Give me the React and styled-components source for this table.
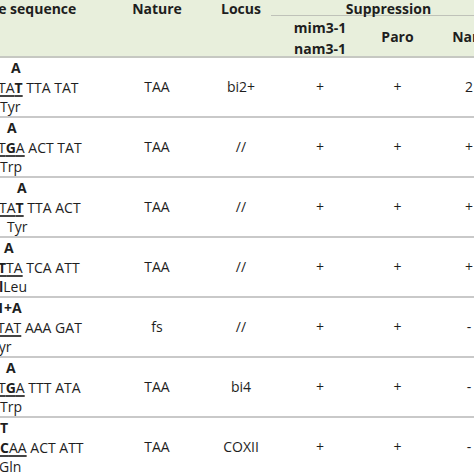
import styled, { createGlobalStyle } from 'styled-components';

const GlobalStyle = createGlobalStyle`
  html, body {
    margin: 0;
    padding: 0;
    background: #fff;
    overflow: hidden;
  }
  body {
    font-family: "Open Sans", "Liberation Sans", sans-serif;
    color: #1e1e1e;
  }
`;

const COLS = '115px 84px 78px 86px 69px 74px';

const rows = [
  {
    top: { text: <b>A</b>, shift: 11 },
    mid: { text: <><u>TA<b>T</b></u> TTA TAT</>, shift: -2 },
    bot: { text: 'Tyr', shift: 0 },
    nature: 'TAA', locus: 'bi2+', mim: '+', paro: '+', nam: '2',
  },
  {
    top: { text: <b>A</b>, shift: 7 },
    mid: { text: <><u>T<b>G</b>A</u> ACT TAT</>, shift: -2 },
    bot: { text: 'Trp', shift: 0 },
    nature: 'TAA', locus: '//', mim: '+', paro: '+', nam: '+',
  },
  {
    top: { text: <b>A</b>, shift: 17 },
    mid: { text: <><u>TA<b>T</b></u> TTA ACT</>, shift: -1 },
    bot: { text: 'Tyr', shift: 7 },
    nature: 'TAA', locus: '//', mim: '+', paro: '+', nam: '+',
  },
  {
    top: { text: <b>A</b>, shift: 4 },
    mid: { text: <><u><b>T</b>TA</u> TCA ATT</>, shift: -2 },
    bot: { text: <><b>l</b>Leu</>, shift: -1 },
    nature: 'TAA', locus: '//', mim: '+', paro: '+', nam: '+',
  },
  {
    top: { text: <b>1+A</b>, shift: -4 },
    mid: { text: <><u>TAT</u> AAA GAT</>, shift: -3 },
    bot: { text: 'Tyr', shift: -9 },
    nature: 'fs', locus: '//', mim: '+', paro: '+', nam: '-',
  },
  {
    top: { text: <b>A</b>, shift: 6 },
    mid: { text: <><u>T<b>G</b>A</u> TTT ATA</>, shift: -2 },
    bot: { text: 'Trp', shift: 0 },
    nature: 'TAA', locus: 'bi4', mim: '+', paro: '+', nam: '-',
  },
  {
    top: { text: <b>T</b>, shift: 0 },
    mid: { text: <><u><b>C</b>AA</u> ACT ATT</>, shift: 0 },
    bot: { text: 'Gln', shift: -1 },
    nature: 'TAA', locus: 'COXII', mim: '+', paro: '+', nam: '-',
  },
];

const App = () => (
  <>
    <GlobalStyle />
    <Frame>
      <Table>
        <Header>
          <HeadCell $col="1" $left>
            <Clip $shift={-70}>Nucleotide sequence</Clip>
          </HeadCell>
          <HeadCell $col="2">Nature</HeadCell>
          <HeadCell $col="3" $offset={6}>Locus</HeadCell>
          <GroupCell>Suppression</GroupCell>
          <SubCell $col="4" $top>
            mim3-1
            <br />
            nam3-1
          </SubCell>
          <SubCell $col="5">Paro</SubCell>
          <SubCell $col="6">Nam</SubCell>
        </Header>

        {rows.map((r, i) => (
          <Row key={i}>
            <SeqCell>
              <Line $shift={r.top.shift}>{r.top.text}</Line>
              <Line $shift={r.mid.shift}>{r.mid.text}</Line>
              <Line $shift={r.bot.shift}>{r.bot.text}</Line>
            </SeqCell>
            <Cell>{r.nature}</Cell>
            <Cell $offset={6}>{r.locus}</Cell>
            <Cell>{r.mim}</Cell>
            <Cell>{r.paro}</Cell>
            <Cell>{r.nam}</Cell>
          </Row>
        ))}
      </Table>
    </Frame>
  </>
);

export default App;

const Frame = styled.div`
  width: 474px;
  height: 474px;
  overflow: hidden;
`;

const Table = styled.div`
  width: 506px;
  font-size: 14px;
`;

const Header = styled.div`
  display: grid;
  grid-template-columns: ${COLS};
  grid-template-rows: 16px 40px;
  height: 56px;
  background: #e8efdc;
  border-bottom: 2px solid #c6c8c2;
  font-weight: 700;
  line-height: 17px;
`;

const HeadCell = styled.div`
  grid-column: ${p => p.$col};
  grid-row: 1 / span 2;
  text-align: ${p => (p.$left ? 'left' : 'center')};
  padding-left: ${p => p.$offset || 0}px;
  white-space: nowrap;
  overflow: hidden;
`;

const Clip = styled.span`
  display: inline-block;
  margin-left: ${p => p.$shift}px;
`;

const GroupCell = styled.div`
  grid-column: 4 / span 3;
  grid-row: 1;
  text-align: center;
  border-bottom: 1px solid #bfc2b9;
  margin-left: -6px;
  white-space: nowrap;
`;

const SubCell = styled.div`
  grid-column: ${p => p.$col};
  grid-row: 2;
  display: flex;
  align-items: ${p => (p.$top ? 'flex-start' : 'center')};
  justify-content: center;
  text-align: center;
  line-height: 21px;
  padding-top: ${p => (p.$top ? 1 : 0)}px;
  white-space: nowrap;
`;

const Row = styled.div`
  display: grid;
  grid-template-columns: ${COLS};
  height: 58px;
  border-bottom: 2px solid #c9c9c9;
  line-height: 19.5px;
`;

const SeqCell = styled.div`
  display: flex;
  flex-direction: column;
  overflow: hidden;
  white-space: nowrap;

  u {
    text-decoration-thickness: 1.5px;
    text-underline-offset: 2px;
    text-decoration-color: #444;
  }
`;

const Line = styled.div`
  margin-left: ${p => p.$shift}px;
`;

const Cell = styled.div`
  display: flex;
  align-items: center;
  justify-content: center;
  padding-left: ${p => p.$offset || 0}px;
  white-space: nowrap;
`;
